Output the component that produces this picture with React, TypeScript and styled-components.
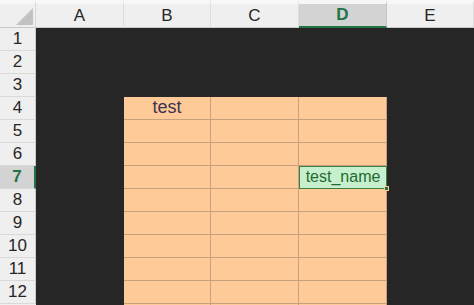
import styled, { createGlobalStyle } from 'styled-components';

const GlobalStyle = createGlobalStyle`
  html, body {
    margin: 0;
    padding: 0;
    background: #262626;
    overflow: hidden;
  }
  body {
    font-family: "Liberation Sans", Arial, sans-serif;
  }
`;

const COLUMNS = ['A', 'B', 'C', 'D', 'E'];
const ROW_COUNT = 12;
const SELECTED_COL = 'D';
const SELECTED_ROW = 7;

const Sheet = styled.main`
  display: grid;
  grid-template-columns: 36px 88px 87px 88px 88px 87px;
  grid-template-rows: 28px repeat(${ROW_COUNT}, 23px) 1fr;
  width: 474px;
  height: 305px;
  overflow: hidden;
  background: #262626;
`;

const Corner = styled.div`
  display: flex;
  align-items: flex-end;
  justify-content: flex-end;
  padding: 0 2px 2px 0;
  background: #efefef;
  border-top: 4px solid #f7f7f7;
  border-right: 1px solid #d6d6d6;
  border-bottom: 1px solid #c9c9c9;
  box-sizing: border-box;
`;

const ColumnHeader = styled.div<{ $selected?: boolean }>`
  display: flex;
  align-items: center;
  justify-content: center;
  box-sizing: border-box;
  font-size: 17px;
  color: ${(p) => (p.$selected ? '#217346' : '#262626')};
  font-weight: ${(p) => (p.$selected ? 700 : 400)};
  background: ${(p) => (p.$selected ? '#d3d3d3' : '#efefef')};
  border-top: 4px solid #f7f7f7;
  border-right: 1px solid ${(p) => (p.$selected ? '#c4c4c4' : '#dcdcdc')};
  border-bottom: ${(p) => (p.$selected ? '2px solid #217346' : '1px solid #c9c9c9')};
`;

const RowHeader = styled.div<{ $selected?: boolean }>`
  display: flex;
  align-items: center;
  justify-content: center;
  box-sizing: border-box;
  font-size: 17px;
  color: ${(p) => (p.$selected ? '#217346' : '#262626')};
  font-weight: ${(p) => (p.$selected ? 700 : 400)};
  background: ${(p) => (p.$selected ? '#d3d3d3' : '#efefef')};
  border-bottom: 1px solid #d9d9d9;
  border-right: ${(p) => (p.$selected ? '2px solid #217346' : '1px solid #c9c9c9')};
`;

const Filler = styled.div<{ $tone: 'header' | 'dark' | 'orange' }>`
  background: ${(p) => (p.$tone === 'header' ? '#efefef' : p.$tone === 'orange' ? '#fecb98' : '#262626')};
  border-right: 1px solid ${(p) => (p.$tone === 'orange' ? '#c5a17d' : 'transparent')};
  box-sizing: border-box;
`;

const Cell = styled.div<{ $tone: 'dark' | 'orange' }>`
  display: flex;
  align-items: flex-end;
  justify-content: center;
  box-sizing: border-box;
  padding-bottom: 3px;
  font-size: 18px;
  line-height: 18px;
  color: #403151;
  background: ${(p) => (p.$tone === 'orange' ? '#fecb98' : '#262626')};
  border-right: 1px solid ${(p) => (p.$tone === 'orange' ? '#c5a17d' : '#262626')};
  border-bottom: 1px solid ${(p) => (p.$tone === 'orange' ? '#c5a17d' : '#262626')};
`;

const NameCell = styled.div`
  position: relative;
  display: flex;
  align-items: flex-end;
  justify-content: center;
  box-sizing: border-box;
  padding-bottom: 3px;
  font-size: 16px;
  line-height: 16px;
  color: #1f6a2e;
  background: #c6efce;
  border: 1px solid #3f7d45;
`;

const FillHandle = styled.span`
  position: absolute;
  right: -3px;
  bottom: -3px;
  width: 3px;
  height: 3px;
  background: #217346;
  border: 1px solid #fecb98;
`;

const cellText: Record<string, string> = {
  B4: 'test',
};

const isOrange = (col: string, row: number) => row >= 4 && ['B', 'C', 'D'].includes(col);

const App = () => {
  const rows = Array.from({ length: ROW_COUNT }, (_, i) => i + 1);

  return (
    <>
      <GlobalStyle />
      <Sheet>
        <Corner>
          <svg width="17" height="17" viewBox="0 0 17 17">
            <polygon points="17,0 17,17 0,17" fill="#c2c2c2" />
          </svg>
        </Corner>
        {COLUMNS.map((col) => (
          <ColumnHeader key={col} $selected={col === SELECTED_COL}>
            {col}
          </ColumnHeader>
        ))}
        {rows.map((row) => [
          <RowHeader key={`h${row}`} $selected={row === SELECTED_ROW}>
            {row}
          </RowHeader>,
          ...COLUMNS.map((col) => {
            const id = `${col}${row}`;
            if (col === SELECTED_COL && row === SELECTED_ROW) {
              return (
                <NameCell key={id}>
                  test_name
                  <FillHandle />
                </NameCell>
              );
            }
            return (
              <Cell key={id} $tone={isOrange(col, row) ? 'orange' : 'dark'}>
                {cellText[id]}
              </Cell>
            );
          }),
        ])}
        <Filler $tone="header" />
        {COLUMNS.map((col) => (
          <Filler key={`f${col}`} $tone={isOrange(col, ROW_COUNT + 1) ? 'orange' : 'dark'} />
        ))}
      </Sheet>
    </>
  );
};

export default App;
